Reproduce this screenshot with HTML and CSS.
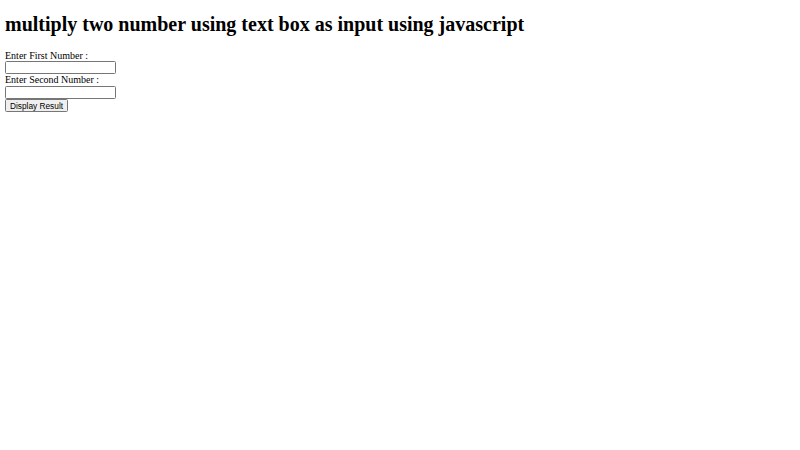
FILE: index.html
```html
<!DOCTYPE html>
<html>
<head>
<meta charset="utf-8">
<title>multiply two number</title>
<link rel="stylesheet" href="styles.css">
</head>
<body>
<h1 class="title">multiply two number using text box as input using javascript</h1>
<form class="form">
  <label class="label" for="first">Enter First Number :</label>
  <input class="field" type="text" id="first">
  <label class="label" for="second">Enter Second Number :</label>
  <input class="field" type="text" id="second">
  <button class="btn" type="button">Display Result</button>
</form>
</body>
</html>
```
FILE: styles.css
```css
html, body {
  margin: 0;
  padding: 0;
  background: #ffffff;
}
body {
  padding: 0 5px;
  font-family: "Liberation Serif", "Times New Roman", serif;
  color: #000;
}
.title {
  margin: 0;
  padding: 13.4px 0;
  font-size: 20px;
  line-height: 23px;
  font-weight: bold;
}
.form {
  margin: 0;
  display: flex;
  flex-direction: column;
  align-items: flex-start;
}
.label {
  font-size: 10px;
  line-height: 11.5px;
}
.field {
  box-sizing: border-box;
  width: 111px;
  height: 13px;
  margin: 0;
  padding: 0 1px;
  border: 1px solid #767676;
  border-radius: 1.5px;
  background: #fff;
  font-size: 8px;
}
.btn {
  box-sizing: border-box;
  height: 12.5px;
  margin: 0.5px 0 0;
  padding: 0 4px;
  border: 1px solid #767676;
  border-radius: 1.5px;
  background: #efefef;
  color: #000;
  font-family: "Liberation Sans", Arial, sans-serif;
  font-size: 8.3px;
  line-height: 10px;
}
```
